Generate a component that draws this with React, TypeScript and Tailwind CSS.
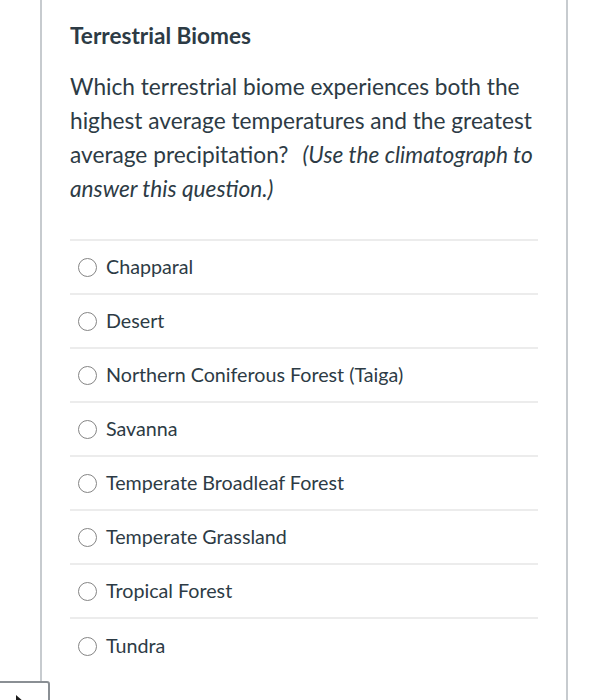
import React from 'react';

const options = [
  'Chapparal',
  'Desert',
  'Northern Coniferous Forest (Taiga)',
  'Savanna',
  'Temperate Broadleaf Forest',
  'Temperate Grassland',
  'Tropical Forest',
  'Tundra',
];

const App: React.FC = () => {
  return (
    <div className="relative h-[700px] overflow-hidden bg-white font-['Lato','Liberation_Sans',sans-serif] text-[#2d3b45]">
      <div className="ml-[40px] h-full w-[528px] border-x-2 border-[#c7cbcf] pl-[28px] pr-[26px] pt-[21px]">
        <h2 className="text-[22.6px] font-bold leading-[30px]">Terrestrial Biomes</h2>

        <p className="mt-[19px] text-[22.7px] leading-[34px]">
          Which terrestrial biome experiences both the highest average temperatures and the greatest
          average precipitation?<em className="pl-[14px]">(Use the climatograph to</em>{' '}
          <em>answer this question.)</em>
        </p>

        {/* Answer options */}
        <div className="mr-[2px] mt-[33px] border-t-2 border-[#ececec]">
          {options.map((opt, i) => (
            <label
              key={opt}
              className={`flex h-[54px] items-center gap-[9px] pl-[8px] ${
                i < options.length - 1 ? 'border-b-2 border-[#ececec]' : ''
              }`}
            >
              <span className="h-[19px] w-[19px] shrink-0 rounded-full border-[1.5px] border-[#858585]" />
              <span className="text-[19.7px]">{opt}</span>
            </label>
          ))}
        </div>
      </div>

      {/* bottom-left overlay */}
      <div className="absolute left-[-4px] top-[681px] h-[30px] w-[54px] rounded-[3px] border-2 border-[#8a8f94] bg-white">
        <svg className="absolute left-[17px] top-[12px]" width="10" height="12" viewBox="0 0 10 12">
          <path d="M1 0 L9 7 L1 10 Z" fill="#1b1b1b" />
        </svg>
      </div>
    </div>
  );
};

export default App;
